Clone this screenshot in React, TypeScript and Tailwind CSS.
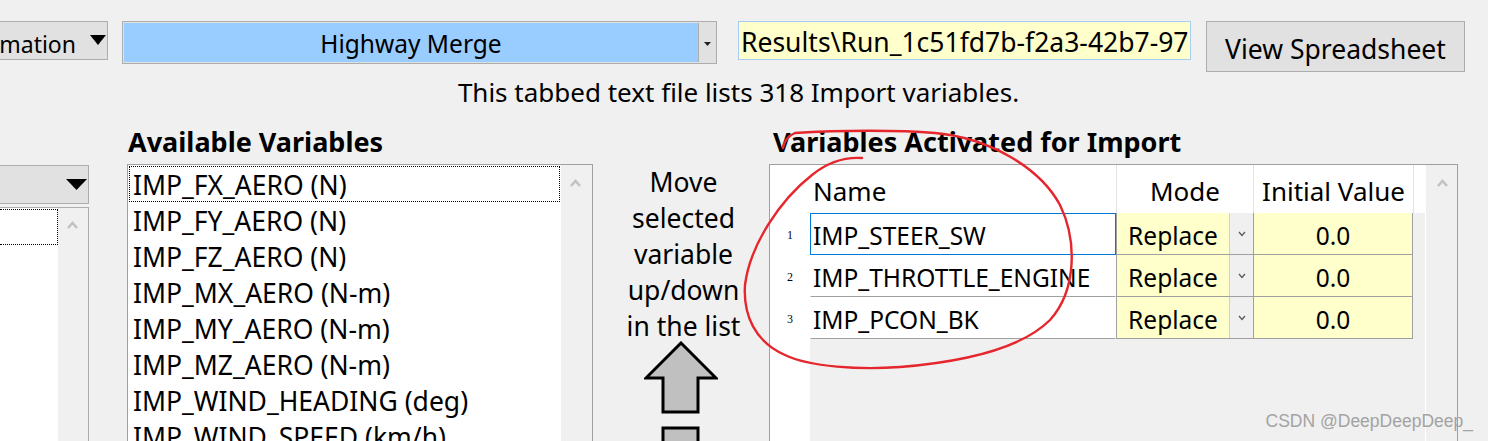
import React from 'react';

// Variables offered on the left, and the ones already activated on the right
const AVAILABLE_VARS = [
  'IMP_FX_AERO (N)',
  'IMP_FY_AERO (N)',
  'IMP_FZ_AERO (N)',
  'IMP_MX_AERO (N-m)',
  'IMP_MY_AERO (N-m)',
  'IMP_MZ_AERO (N-m)',
  'IMP_WIND_HEADING (deg)',
  'IMP_WIND_SPEED (km/h)',
];

const ACTIVE_VARS = [
  { name: 'IMP_STEER_SW', mode: 'Replace', value: '0.0' },
  { name: 'IMP_THROTTLE_ENGINE', mode: 'Replace', value: '0.0' },
  { name: 'IMP_PCON_BK', mode: 'Replace', value: '0.0' },
];

function ScrollUp() {
  return (
    <svg width="11" height="9" viewBox="0 0 11 9">
      <polyline points="1,8 5.5,3 10,8" fill="none" stroke="#c2c2c2" strokeWidth="2.6" />
    </svg>
  );
}

function SmallChevron() {
  return (
    <svg width="8" height="6" viewBox="0 0 8 6">
      <polyline points="1,1 4,4.5 7,1" fill="none" stroke="#5a5a5a" strokeWidth="1.3" />
    </svg>
  );
}

export default function App() {
  return (
    <div className="relative w-[1488px] h-[441px] overflow-hidden bg-[#f0f0f0] text-black text-[26.5px] font-['Noto_Sans',sans-serif]">
      {/* Top toolbar */}
      <div className="flex items-start pt-[21px]">
        <div className="-ml-[193px] w-[301px] h-[39px] shrink-0 border border-[#adadad] bg-[#e1e1e1] flex items-start justify-end pr-[1px]">
          <span className="text-[23px] leading-[28px] mt-[8px] whitespace-nowrap">mation</span>
          <svg className="mt-[13px] ml-[14px]" width="16" height="10" viewBox="0 0 16 10">
            <polygon points="0,0 16,0 8,10" fill="#000" />
          </svg>
        </div>

        <div className="ml-[14px] w-[595px] h-[43px] shrink-0 border border-[#adadad] bg-[#e1e1e1] p-[1px] flex">
          <div className="flex-1 bg-[#99ccff] text-center text-[24.5px] leading-[28px] pt-[7px] whitespace-nowrap">
            Highway Merge
          </div>
          <div className="w-[17px] border-l border-[#adadad] flex justify-center pt-[19px]">
            <svg width="7" height="4" viewBox="0 0 7 4">
              <polygon points="0,0 7,0 3.5,4" fill="#222" />
            </svg>
          </div>
        </div>

        <div className="ml-[21px] w-[453px] h-[39px] shrink-0 border border-[#a9cdf2] bg-[#ffffcc] pl-[2px] overflow-hidden whitespace-nowrap leading-[28px] pt-[6px]">
          Results\Run_1c51fd7b-f2a3-42b7-97
        </div>

        <div className="ml-[15px] w-[259px] h-[51px] shrink-0 border border-[#adadad] bg-[#e1e1e1] text-center leading-[28px] pt-[13px] whitespace-nowrap">
          View Spreadsheet
        </div>
      </div>

      <div className="mt-[6px] ml-[437px] w-[603px] text-center text-[26px] leading-[28px] whitespace-nowrap">
        This tabbed text file lists 318 Import variables.
      </div>

      {/* Main area */}
      <div className="mt-[20px] flex items-start">
        {/* Cropped left column */}
        <div className="w-[89px] shrink-0">
          <div className="h-[39px]" />
          <div className="h-[39px] border border-l-0 border-[#adadad] bg-[#e1e1e1] flex justify-end pr-[1px] pt-[13px]">
            <svg width="21" height="11" viewBox="0 0 21 11">
              <polygon points="0,0 21,0 10.5,11" fill="#000" />
            </svg>
          </div>
          <div className="mt-[3px] h-[240px] border-r border-t border-[#adadad] flex">
            <div className="w-[58px] bg-white pt-[1px]">
              <div className="h-[36px] border border-l-0 border-dotted border-black" />
            </div>
            <div className="flex-1 bg-[#f0f0f0] pl-[9px] pt-[12px]">
              <ScrollUp />
            </div>
          </div>
        </div>

        {/* Available variables */}
        <div className="ml-[38px] w-[466px] shrink-0">
          <div className="h-[38px] pl-[1px] font-bold text-[27px] leading-[32px] whitespace-nowrap">Available Variables</div>
          <div className="h-[300px] border border-[#a0a0a0] flex">
            <div className="w-[433px] bg-white px-[1px] pt-[1px]">
              {AVAILABLE_VARS.map((v, i) => (
                <div
                  key={v}
                  className={
                    'h-[36px] border pl-[3px] pt-[4px] leading-[28px] whitespace-nowrap ' +
                    (i === 0 ? 'border-dotted border-black' : 'border-transparent')
                  }
                >
                  {v}
                </div>
              ))}
            </div>
            <div className="flex-1 bg-[#f0f0f0] pl-[9px] pt-[13px]">
              <ScrollUp />
            </div>
          </div>
        </div>

        {/* Move up/down */}
        <div className="ml-[5px] w-[171px] shrink-0 flex flex-col">
          <div className="h-[38px]" />
          <div className="text-center leading-[36px]">
            Move
            <br />
            selected
            <br />
            variable
            <br />
            up/down
            <br />
            in the list
          </div>
          <svg className="-mt-[3px] ml-[46px]" width="74" height="73" viewBox="0 0 74 73">
            <polygon
              points="37,2 72,37 54,37 54,71 19,71 19,37 2,37"
              fill="#c0c0c0"
              stroke="#000"
              strokeWidth="3"
            />
          </svg>
          <svg className="mt-[12px] ml-[46px]" width="74" height="73" viewBox="0 0 74 73">
            <polygon
              points="19,2 54,2 54,36 72,36 37,71 2,36 19,36"
              fill="#c0c0c0"
              stroke="#000"
              strokeWidth="3"
            />
          </svg>
        </div>

        {/* Variables activated for import */}
        <div className="w-[689px] shrink-0">
          <div className="h-[38px] pl-[4px] font-bold text-[27px] leading-[32px] whitespace-nowrap">
            Variables Activated for Import
          </div>
          <div className="h-[300px] border border-[#a0a0a0] flex">
            {/* row numbers */}
            <div className="w-[40px] bg-white">
              <div className="h-[48px]" />
              {ACTIVE_VARS.map((r, i) => (
                <div
                  key={r.name}
                  className="h-[42px] flex items-center justify-center pt-[2px] text-[12px] font-['Liberation_Serif',serif]"
                >
                  {i + 1}
                </div>
              ))}
            </div>

            {/* cells */}
            <div className="w-[615px] bg-[#f0f0f0] text-[24.5px]">
              <div className="h-[48px] bg-white flex text-[26px]">
                <div className="w-[306px] pl-[3px] pt-[12px] leading-[28px]">Name</div>
                <div className="w-[137px] border-l border-[#e3e3e3] text-center pt-[12px] leading-[28px]">Mode</div>
                <div className="w-[160px] border-l border-[#e3e3e3] text-center pt-[12px] leading-[28px] whitespace-nowrap">
                  Initial Value
                </div>
                <div className="w-[12px] border-l border-[#e3e3e3]" />
              </div>
              {ACTIVE_VARS.map((r, i) => (
                <div key={r.name} className="h-[42px] flex">
                  <div
                    className={
                      'w-[306px] bg-white border pl-[2px] pt-[8px] leading-[28px] whitespace-nowrap ' +
                      (i === 0 ? 'border-[#0078d7]' : 'border-transparent border-b-[#a0a0a0]')
                    }
                  >
                    {r.name}
                  </div>
                  <div className="w-[138px] flex border-x border-b border-[#a0a0a0]">
                    <div className="w-[112px] bg-[#ffffcc] text-center pt-[9px] leading-[28px]">{r.mode}</div>
                    <div className="flex-1 bg-[#f0f0f0] border-l border-[#d0d0d0] flex justify-center pt-[18px]">
                      <SmallChevron />
                    </div>
                  </div>
                  <div className="w-[159px] bg-[#ffffcc] border-r border-b border-[#a0a0a0] text-center pt-[9px] leading-[28px]">
                    {r.value}
                  </div>
                </div>
              ))}
            </div>

            {/* vertical scrollbar */}
            <div className="flex-1 bg-[#f0f0f0] border-l border-white pl-[11px] pt-[13px]">
              <ScrollUp />
            </div>
          </div>
        </div>
      </div>

      {/* Red hand-drawn annotation */}
      <svg className="absolute left-0 top-0 pointer-events-none" width="1488" height="441" viewBox="0 0 1488 441">
        <path
          d="M 783 148 Q 785 137 795 133 C 840 130 900 130 935 133 C 990 138 1040 168 1060 205 C 1077 240 1077 290 1050 320 C 1020 350 960 362 900 367 C 860 370 810 367 785 355 C 755 342 743 315 745 285 C 750 245 780 200 812 175 C 828 162 845 157 862 158"
          fill="none"
          stroke="#e5262c"
          strokeWidth="2.4"
          strokeLinecap="round"
        />
      </svg>

      {/* Watermark */}
      <div className="absolute right-[15px] bottom-[9px] text-[17.5px] leading-[22px] text-[#a3a3a3] font-['Liberation_Sans',sans-serif] whitespace-nowrap">
        CSDN @DeepDeepDeep_
      </div>
    </div>
  );
}
